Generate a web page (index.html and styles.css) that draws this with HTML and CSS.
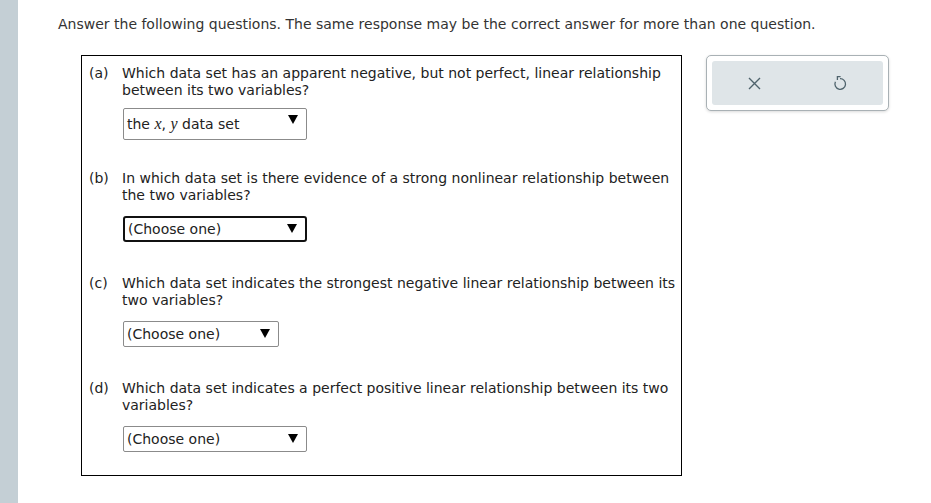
FILE: index.html
```html
<!DOCTYPE html>
<html>
<head>
<meta charset="utf-8">
<link rel="stylesheet" href="styles.css">
</head>
<body>
<div class="page">
  <div class="strip"></div>
  <main class="main">
    <p class="intro">Answer the following questions. The same response may be the correct answer for more than one question.</p>
    <div class="row">
      <div class="qbox">
        <div class="q">
          <div class="qtext"><span class="lbl">(a)</span><span class="body">Which data set has an apparent negative, but not perfect, linear relationship<br>between its two variables?</span></div>
          <div class="selrow"><div class="sel sel-a"><span class="val">the <i class="m">x</i>, <i class="m">y</i> data set</span><span class="arr"></span></div></div>
        </div>
        <div class="q">
          <div class="qtext"><span class="lbl">(b)</span><span class="body">In which data set is there evidence of a strong nonlinear relationship between<br>the two variables?</span></div>
          <div class="selrow"><div class="sel focus"><span class="val">(Choose one)</span><span class="arr"></span></div></div>
        </div>
        <div class="q">
          <div class="qtext"><span class="lbl">(c)</span><span class="body">Which data set indicates the strongest negative linear relationship between its<br>two variables?</span></div>
          <div class="selrow"><div class="sel narrow"><span class="val">(Choose one)</span><span class="arr"></span></div></div>
        </div>
        <div class="q">
          <div class="qtext"><span class="lbl">(d)</span><span class="body">Which data set indicates a perfect positive linear relationship between its two<br>variables?</span></div>
          <div class="selrow"><div class="sel"><span class="val">(Choose one)</span><span class="arr"></span></div></div>
        </div>
      </div>
      <div class="tools">
        <div class="tools-inner">
          <button class="tbtn" aria-label="Clear">
            <svg width="15" height="15" viewBox="0 0 15 15"><path d="M2 2 L13 13 M13 2 L2 13" stroke="#4f636c" stroke-width="1.4" fill="none"/></svg>
          </button>
          <button class="tbtn" aria-label="Undo">
            <svg width="16" height="18" viewBox="-8 -9 16 18"><path d="M-4.6 -1.2 A5.3 5.3 0 1 0 0 -4.3" stroke="#4f636c" stroke-width="1.3" fill="none"/><path d="M0.6 -6.4 L-2.6 -6.4 L-2.6 -3" stroke="#4f636c" stroke-width="1.3" fill="none" stroke-linejoin="miter"/></svg>
          </button>
        </div>
      </div>
    </div>
  </main>
</div>
</body>
</html>
```

FILE: styles.css
```css
html, body {
  margin: 0;
  padding: 0;
  background: #fff;
}
body {
  font-family: "DejaVu Sans", Verdana, sans-serif;
  font-size: 14px;
  color: #222;
}
.page {
  display: flex;
  min-height: 503px;
}
.strip {
  width: 18px;
  flex: none;
  background: #c4cfd5;
}
.main {
  flex: 1;
  padding-left: 40px;
}
.intro {
  margin: 16px 0 0 0;
  line-height: 17px;
  color: #333;
}
.row {
  display: flex;
  align-items: flex-start;
  margin-top: 22px;
  margin-left: 23px;
  gap: 24px;
}
.qbox {
  width: 599px;
  height: 419px;
  border: 1px solid #000;
  padding: 0;
}
.q {
  height: 105px;
  padding-top: 9px;
  box-sizing: border-box;
}
.qtext {
  display: flex;
  line-height: 17px;
  padding-left: 7px;
}
.lbl {
  width: 33px;
  flex: none;
}
.body {
  white-space: nowrap;
}
.selrow {
  display: flex;
  align-items: center;
  height: 32px;
  margin-top: 9px;
  padding-left: 41px;
}
.sel {
  position: relative;
  width: 179px;
  height: 24px;
  border: 1px solid #8b8b8b;
  border-radius: 2px;
  display: flex;
  align-items: center;
  padding-left: 3px;
  box-sizing: content-box;
  font-size: 14px;
}
.sel .val {
  flex: 1;
  white-space: nowrap;
}
.sel-a {
  height: 30px;
}
.sel.focus {
  border: 2px solid #111;
  border-radius: 3px;
  width: 177px;
  height: 22px;
}
.sel.narrow {
  width: 151px;
}
.arr {
  width: 0;
  height: 0;
  border-left: 5px solid transparent;
  border-right: 5px solid transparent;
  border-top: 9px solid #000;
  margin-right: 8px;
  margin-top: -2px;
}
.sel-a .arr {
  margin-top: -10px;
}
.m {
  font-family: "Liberation Serif", "Times New Roman", serif;
  font-size: 16px;
}
.tools {
  width: 171px;
  height: 44px;
  padding: 5px;
  border: 1px solid #a9b1b5;
  border-radius: 5px;
  background: #fff;
  box-shadow: 0 1px 3px rgba(0,0,0,0.15);
}
.tools-inner {
  height: 100%;
  background: #dfe5e8;
  border-radius: 3px;
  display: flex;
}
.tbtn {
  flex: 1;
  border: 0;
  background: transparent;
  padding: 0;
  display: flex;
  align-items: center;
  justify-content: center;
}
```
